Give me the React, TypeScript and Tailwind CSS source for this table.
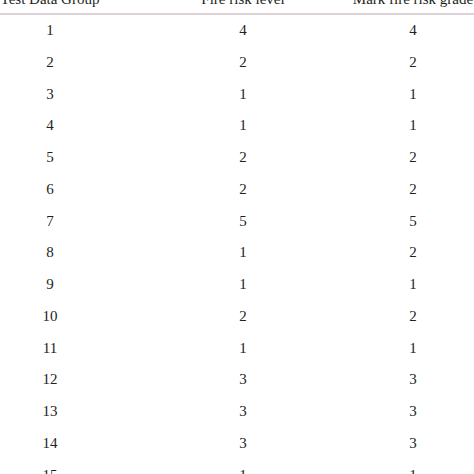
import React from 'react';

const rows: [number, number, number][] = [
  [1, 4, 4],
  [2, 2, 2],
  [3, 1, 1],
  [4, 1, 1],
  [5, 2, 2],
  [6, 2, 2],
  [7, 5, 5],
  [8, 1, 2],
  [9, 1, 1],
  [10, 2, 2],
  [11, 1, 1],
  [12, 3, 3],
  [13, 3, 3],
  [14, 3, 3],
  [15, 1, 1],
  [16, 2, 2],
];

const cols = 'grid grid-cols-[100px_286px_54px]';
const cell = 'flex justify-center whitespace-nowrap';

export default function App() {
  return (
    <div
      className="h-[474px] w-[474px] overflow-hidden bg-white text-[15px] text-[#231f20]"
      style={{ fontFamily: '"Liberation Serif", "Times New Roman", serif' }}
    >
      {/* Header row, clipped at the top like the reference */}
      <div className={`${cols} -mt-[9px] pb-[5px] leading-[17px] border-b-2 border-[#dcd2d6]`}>
        <div className={cell}>Test Data Group</div>
        <div className={cell}>Fire risk level</div>
        <div className={cell}>Mark fire risk grade</div>
      </div>

      {/* Body */}
      {rows.map(([group, level, grade]) => (
        <div key={group} className={`${cols} h-[31.77px] leading-[31.77px]`}>
          <div className={cell}>{group}</div>
          <div className={cell}>{level}</div>
          <div className={cell}>{grade}</div>
        </div>
      ))}
    </div>
  );
}
